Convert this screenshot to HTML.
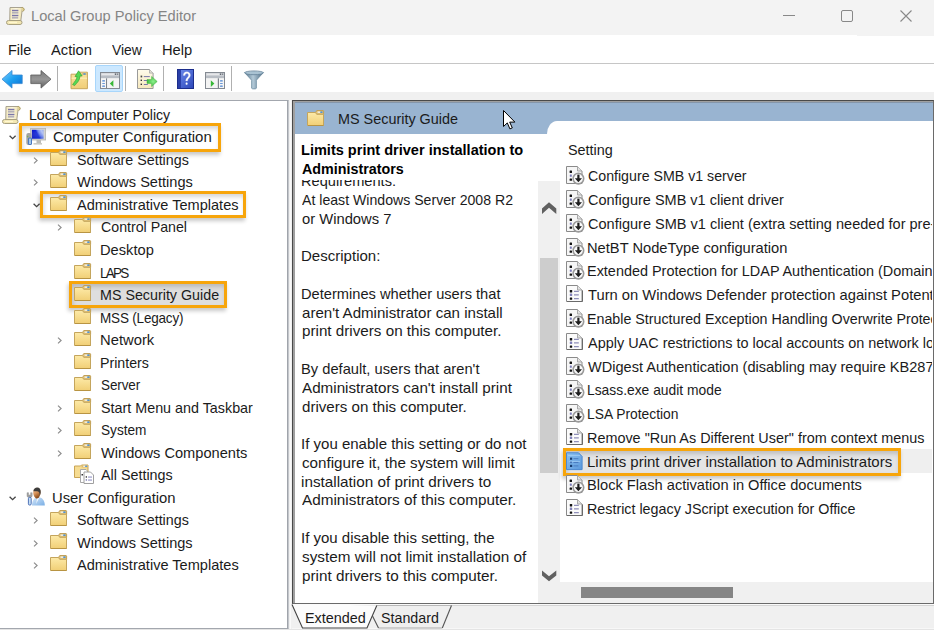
<!DOCTYPE html><html><head><meta charset="utf-8"><style>
html,body{margin:0;padding:0;}
body{width:934px;height:630px;position:relative;overflow:hidden;background:#fff;font-family:"Liberation Sans",sans-serif;}
.t{position:absolute;white-space:nowrap;line-height:15px;transform-origin:0 0;}
.ic{position:absolute;display:block;overflow:visible;}
.b{position:absolute;box-sizing:border-box;}
.clip{position:absolute;overflow:hidden;}
</style></head><body>
<div class="b" style="left:0;top:0;width:934px;height:35px;background:#f3f3f3"></div>
<div class="b" style="left:857px;top:35px;width:77px;height:1px;background:#f3f3f3"></div>
<svg class="ic" style="left:6px;top:6px" width="20" height="20" viewBox="0 0 20 20">
<defs><linearGradient id="g1" x1="0" y1="0" x2="1" y2="0"><stop offset="0" stop-color="#f1e7bd"/><stop offset="0.5" stop-color="#fdf8de"/><stop offset="1" stop-color="#efe2ae"/></linearGradient></defs>
<path d="M4 1.5h12.5l-1.8 14h-11z" fill="url(#g1)" stroke="#a8a290" stroke-width="1"/>
<path d="M15.5 1.5a2.2 2.2 0 0 1 2.6 2.8l-1.6 1.2" fill="#e4d395" stroke="#a89a60" stroke-width="1"/>
<rect x="6" y="3.8" width="6.4" height="1.3" fill="#7b76a8"/><rect x="6" y="5.6" width="6.4" height="2" fill="#b4b0b8"/>
<rect x="6" y="8.8" width="6.4" height="1.3" fill="#7b76a8"/><rect x="6" y="10.6" width="6.2" height="2" fill="#b4b0b8"/>
<path d="M2.5 14.5h11.5a2 2 0 0 1 0 4h-11.5a2 2 0 0 1 0-4z" fill="#f3e7b2" stroke="#a8a080" stroke-width="1"/>
<rect x="3" y="15.8" width="8" height="1.3" fill="#fff7d0"/>
</svg>
<div class="b" style="left:783px;top:15px;width:12px;height:1px;background:#888"></div>
<div class="b" style="left:841px;top:10px;width:12px;height:12px;border:1px solid #888;border-radius:2px"></div>
<svg class="ic" style="left:900px;top:10px" width="12" height="12" viewBox="0 0 12 12"><path d="M0.5 0.5L11.5 11.5M11.5 0.5L0.5 11.5" stroke="#888" stroke-width="1.1"/></svg>
<div class="b" style="left:0;top:63px;width:934px;height:1px;background:#c6c6c6"></div>
<div class="b" style="left:0;top:92px;width:934px;height:8px;background:#f0f0f0"></div>
<svg class="ic" style="left:1px;top:69px" width="22" height="21" viewBox="0 0 22 21">
<defs><linearGradient id="tba" x1="0" y1="0" x2="1" y2="1"><stop offset="0" stop-color="#7fd0ff"/><stop offset="0.5" stop-color="#1ea0f0"/><stop offset="1" stop-color="#0a6cd0"/></linearGradient></defs>
<path d="M1 10.2L11 1.5v4.5h10.2v8.6h-10.2v4.5z" fill="url(#tba)" stroke="#3a88d0" stroke-width="0.8" stroke-linejoin="round"/></svg>
<svg class="ic" style="left:30px;top:69px" width="22" height="21" viewBox="0 0 22 21">
<defs><linearGradient id="tbf" x1="0" y1="0" x2="0" y2="1"><stop offset="0" stop-color="#7a7a7a"/><stop offset="0.5" stop-color="#979797"/><stop offset="1" stop-color="#5e5e5e"/></linearGradient></defs>
<path d="M21 10.2L11 1.5v4.5H0.8v8.6h10.2v4.5z" fill="url(#tbf)" stroke="#5a5a5a" stroke-width="0.8" stroke-linejoin="round"/></svg>
<div class="b" style="left:57px;top:66px;width:1px;height:25px;background:#b0b0b0"></div>
<svg class="ic" style="left:70px;top:70px" width="20" height="20" viewBox="0 0 20 20">
<defs><linearGradient id="tbu" x1="0" y1="0" x2="0" y2="1"><stop offset="0" stop-color="#fbe3a0"/><stop offset="1" stop-color="#f0cd76"/></linearGradient></defs>
<path d="M1 4.2h7.2l1.2-2h8v16.5h-16.4z" fill="url(#tbu)" stroke="#c8a65c"/>
<rect x="1.5" y="7.6" width="15.5" height="1.2" fill="#fdeeb8"/>
<path d="M11.5 3.2h5.2v1.6h-5.2z" fill="#d9bb70"/><rect x="13.2" y="3.3" width="2.6" height="1.4" rx="0.7" fill="#4a90e0"/>
<path d="M2.6 14.6C4.4 11.6 6.8 9.8 7 6.4L5 6.5L8.6 0.8L12.2 6L10 6.1C9.9 10.6 6.8 13 4.6 15.6z" fill="#55d855" stroke="#2c9e2c" stroke-width="0.6" stroke-linejoin="round"/></svg>
<div class="b" style="left:95px;top:65px;width:28px;height:27px;background:#cce8ff;border:1px solid #a8d6fb;border-radius:2px"></div>
<svg class="ic" style="left:100px;top:72px" width="20" height="17" viewBox="0 0 20 17">
<rect x="0.5" y="0.5" width="19" height="16" fill="#f2f2f2" stroke="#848a92"/>
<rect x="1" y="1" width="18" height="2.6" fill="#c8ccd2"/><rect x="1.5" y="1.6" width="12.5" height="1.1" fill="#f2f2f2"/><rect x="15" y="1.5" width="1.2" height="1.4" fill="#5a6068"/><rect x="17" y="1.5" width="1.2" height="1.4" fill="#7a8088"/>
<rect x="1" y="3.6" width="18" height="2.8" fill="#b8bdc4"/>
<rect x="1" y="6.4" width="5" height="9.6" fill="#f6f6f6"/><rect x="6" y="6.4" width="1.2" height="9.6" fill="#7c828a"/>
<rect x="2.2" y="8.2" width="2.8" height="1.2" rx="0.5" fill="#4a82d0"/><rect x="2.2" y="10.9" width="2.8" height="1.2" rx="0.5" fill="#6a98d8"/><rect x="2.2" y="13.6" width="2.8" height="1.2" rx="0.5" fill="#4a82d0"/>
<rect x="7.2" y="6.4" width="11.8" height="9.6" fill="#f4f4f4"/>
<path d="M13.4 8.2l-3.6 3.4l3.6 3.4z" fill="#38b838"/></svg>
<div class="b" style="left:125px;top:66px;width:1px;height:25px;background:#b0b0b0"></div>
<svg class="ic" style="left:137px;top:69px" width="22" height="21" viewBox="0 0 22 21">
<defs><linearGradient id="tbe" x1="0" y1="0" x2="0" y2="1"><stop offset="0" stop-color="#fffbec"/><stop offset="1" stop-color="#f6e8bc"/></linearGradient>
<radialGradient id="tbg" cx="0.6" cy="0.5" r="0.6"><stop offset="0" stop-color="#8cf08c"/><stop offset="1" stop-color="#3cb83c"/></radialGradient></defs>
<path d="M0.5 0.5h12l3.6 3.6v15.4h-15.6z" fill="url(#tbe)" stroke="#9a9a9a"/><path d="M12.5 0.5v3.6h3.6" fill="#e4e0d4" stroke="#a8a8a8" stroke-width="0.8"/>
<rect x="3.6" y="6.6" width="1.6" height="1.8" fill="#444"/><rect x="6.8" y="7.1" width="6" height="1" fill="#7a78a8"/>
<rect x="3.6" y="10.6" width="1.4" height="1.4" fill="#333"/><rect x="6.8" y="11" width="4" height="1" fill="#7a78a8"/>
<rect x="3.6" y="14.6" width="1.4" height="1.4" fill="#333"/><rect x="6.8" y="15" width="4" height="1" fill="#7a78a8"/>
<path d="M10 10.6h4.6v-3.2l5.6 5.1l-5.6 5.1v-3.2h-4.6z" fill="url(#tbg)" stroke="#44b444" stroke-width="0.5" stroke-linejoin="round"/></svg>
<div class="b" style="left:163px;top:66px;width:1px;height:25px;background:#b0b0b0"></div>
<svg class="ic" style="left:177px;top:69px" width="17" height="20" viewBox="0 0 17 20">
<defs><linearGradient id="tbh" x1="0" y1="0" x2="1" y2="1"><stop offset="0" stop-color="#6f8ff0"/><stop offset="1" stop-color="#2c46b8"/></linearGradient></defs>
<rect x="0.5" y="0.5" width="16" height="19" fill="url(#tbh)" stroke="#1c2e8c"/>
<rect x="1" y="1" width="3" height="18" fill="#2a3fa8"/>
<path d="M6.2 6.4c0-2.3 1.5-3.7 3.6-3.7s3.6 1.3 3.6 3.4c0 3-2.8 3.2-2.8 5.9h-1.9c0-3.4 2.8-3.7 2.8-5.8c0-1-0.7-1.7-1.7-1.7s-1.7 0.8-1.7 1.9z" fill="#fff" stroke="#c8d0e8" stroke-width="0.3"/>
<rect x="8.6" y="13.6" width="2" height="2.2" rx="0.8" fill="#fff"/></svg>
<svg class="ic" style="left:205px;top:72px" width="20" height="17" viewBox="0 0 20 17">
<rect x="0.5" y="0.5" width="19" height="16" fill="#f2f2f2" stroke="#848a92"/>
<rect x="1" y="1" width="18" height="2.6" fill="#c8ccd2"/><rect x="1.5" y="1.6" width="12.5" height="1.1" fill="#f2f2f2"/><rect x="15" y="1.5" width="1.2" height="1.4" fill="#5a6068"/><rect x="17" y="1.5" width="1.2" height="1.4" fill="#7a8088"/>
<rect x="1" y="3.6" width="18" height="2.8" fill="#b8bdc4"/>
<rect x="1" y="6.4" width="11.8" height="9.6" fill="#f4f4f4"/>
<rect x="12.8" y="6.4" width="1.2" height="9.6" fill="#7c828a"/><rect x="14" y="6.4" width="5" height="9.6" fill="#f6f6f6"/>
<rect x="15" y="8.2" width="2.8" height="1.2" rx="0.5" fill="#4a82d0"/><rect x="15" y="10.9" width="2.8" height="1.2" rx="0.5" fill="#6a98d8"/><rect x="15" y="13.6" width="2.8" height="1.2" rx="0.5" fill="#4a82d0"/>
<path d="M5.8 8.2l3.6 3.4l-3.6 3.4z" fill="#38b838"/></svg>
<div class="b" style="left:231px;top:66px;width:1px;height:25px;background:#b0b0b0"></div>
<svg class="ic" style="left:244px;top:70px" width="20" height="20" viewBox="0 0 20 20">
<defs><linearGradient id="tbfl" x1="0" y1="0" x2="1" y2="0"><stop offset="0" stop-color="#4f6e84"/><stop offset="0.45" stop-color="#b4cad8"/><stop offset="1" stop-color="#4a6880"/></linearGradient></defs>
<path d="M0.6 2.6L7.6 10.2V18.2C7.6 19.2 12.4 19.2 12.4 18.2V10.2L19.4 2.6z" fill="url(#tbfl)" stroke="#66869c" stroke-width="0.7"/>
<ellipse cx="10" cy="2.8" rx="9.4" ry="1.9" fill="#a9c2d2" stroke="#5c7a90" stroke-width="0.7"/></svg>
<div class="b" style="left:0;top:100px;width:289px;height:529px;background:#fff;border-top:1px solid #a3a7ae;border-right:2px solid #c4c7cc;border-bottom:1px solid #a3a7ae"></div>
<div class="b" style="left:287px;top:100px;width:1px;height:529px;background:#a0a4ab"></div>
<div class="b" style="left:289px;top:100px;width:3px;height:530px;background:#f0f0f0"></div>
<div class="b" style="left:290px;top:100px;width:1px;height:530px;background:#fafafa"></div>
<div class="b" style="left:19px;top:123px;width:202px;height:29px;border:3px solid #f7a50b;background:#fff;box-shadow:-1px 3px 4px rgba(0,0,0,0.22), inset 1px 3px 4px rgba(0,0,0,0.16)"></div>
<div class="b" style="left:40px;top:191px;width:206px;height:27px;border:3px solid #f7a50b;background:#fff;box-shadow:-1px 3px 4px rgba(0,0,0,0.22), inset 1px 3px 4px rgba(0,0,0,0.16)"></div>
<div class="b" style="left:69px;top:281px;width:158px;height:27px;border:3px solid #f7a50b;background:#dedede;box-shadow:-1px 3px 4px rgba(0,0,0,0.22), inset 1px 3px 4px rgba(0,0,0,0.16)"></div>
<svg class="ic" style="left:2px;top:105px" width="20" height="20" viewBox="0 0 20 20">
<defs><linearGradient id="g2" x1="0" y1="0" x2="1" y2="0"><stop offset="0" stop-color="#f1e7bd"/><stop offset="0.5" stop-color="#fdf8de"/><stop offset="1" stop-color="#efe2ae"/></linearGradient></defs>
<path d="M4 1.5h12.5l-1.8 14h-11z" fill="url(#g2)" stroke="#a8a290" stroke-width="1"/>
<path d="M15.5 1.5a2.2 2.2 0 0 1 2.6 2.8l-1.6 1.2" fill="#e4d395" stroke="#a89a60" stroke-width="1"/>
<rect x="6" y="3.8" width="6.4" height="1.3" fill="#7b76a8"/><rect x="6" y="5.6" width="6.4" height="2" fill="#b4b0b8"/>
<rect x="6" y="8.8" width="6.4" height="1.3" fill="#7b76a8"/><rect x="6" y="10.6" width="6.2" height="2" fill="#b4b0b8"/>
<path d="M2.5 14.5h11.5a2 2 0 0 1 0 4h-11.5a2 2 0 0 1 0-4z" fill="#f3e7b2" stroke="#a8a080" stroke-width="1"/>
<rect x="3" y="15.8" width="8" height="1.3" fill="#fff7d0"/>
</svg>
<svg class="ic" style="left:24px;top:127px" width="24" height="20" viewBox="0 0 24 20">
<defs><linearGradient id="g3" x1="0" y1="0.4" x2="1" y2="0"><stop offset="0" stop-color="#0008c0"/><stop offset="0.38" stop-color="#0a1ed8"/><stop offset="0.55" stop-color="#7088ec"/><stop offset="0.8" stop-color="#b4c4f4"/><stop offset="1" stop-color="#90a6ee"/></linearGradient>
<linearGradient id="g4" x1="0" y1="0" x2="0" y2="1"><stop offset="0" stop-color="#ffffff" stop-opacity="0"/><stop offset="1" stop-color="#2040d0" stop-opacity="0.45"/></linearGradient></defs>
<rect x="6.6" y="1.5" width="15" height="11.5" fill="#d4d4d0" stroke="#b4b4b0" stroke-width="0.8"/>
<rect x="7.9" y="2.8" width="11.7" height="8.8" fill="url(#g3)"/>
<rect x="7.9" y="2.8" width="11.7" height="8.8" fill="url(#g4)"/>
<rect x="12.5" y="13" width="4.5" height="3" fill="#bcbcb8"/><rect x="9.5" y="16" width="8.5" height="1.6" fill="#c8c8c4"/>
<rect x="2.3" y="6" width="5.2" height="12" rx="2" fill="#a4a4a4"/>
<circle cx="3.6" cy="9.6" r="0.8" fill="#78b058"/>
<rect x="4" y="10.5" width="4" height="7.6" rx="1.6" fill="#4a78c0"/><rect x="5.3" y="11.6" width="1.4" height="5.4" fill="#c8e8f8"/>
</svg>
<svg class="ic" style="left:9px;top:135px" width="8" height="6" viewBox="0 0 8 6"><path d="M0.6 0.7L3.6 3.7L6.6 0.7" fill="none" stroke="#444" stroke-width="1.3"/></svg>
<svg class="ic" style="left:50px;top:150px" width="18" height="17" viewBox="0 0 18 17">
<defs><linearGradient id="g5" x1="0" y1="0" x2="0" y2="1"><stop offset="0" stop-color="#fdeaa8"/><stop offset="1" stop-color="#f1cf76"/></linearGradient></defs>
<path d="M8.5 2.5L9.8 0.5h6.2a0.8 0.8 0 0 1 0.6 0.6v3.4h-8.3z" fill="#dfc077" stroke="#c2a057" stroke-width="1"/>
<rect x="10.6" y="1.4" width="3" height="1.6" fill="#eeeadc"/><rect x="13.3" y="1.4" width="2.2" height="1.6" fill="#4d93d8"/>
<path d="M0.5 2.5h8l1.2 1.8h6.8v11.2h-16z" fill="url(#g5)" stroke="#c4a55d" stroke-width="1"/>
<path d="M1 15.5h15.5" stroke="#b89443" stroke-width="1"/>
</svg>
<svg class="ic" style="left:33px;top:157px" width="6" height="8" viewBox="0 0 6 8"><path d="M1 0.6L4.1 3.5L1 6.4" fill="none" stroke="#8c8c8c" stroke-width="1.15"/></svg>
<svg class="ic" style="left:50px;top:172px" width="18" height="17" viewBox="0 0 18 17">
<defs><linearGradient id="g6" x1="0" y1="0" x2="0" y2="1"><stop offset="0" stop-color="#fdeaa8"/><stop offset="1" stop-color="#f1cf76"/></linearGradient></defs>
<path d="M8.5 2.5L9.8 0.5h6.2a0.8 0.8 0 0 1 0.6 0.6v3.4h-8.3z" fill="#dfc077" stroke="#c2a057" stroke-width="1"/>
<rect x="10.6" y="1.4" width="3" height="1.6" fill="#eeeadc"/><rect x="13.3" y="1.4" width="2.2" height="1.6" fill="#4d93d8"/>
<path d="M0.5 2.5h8l1.2 1.8h6.8v11.2h-16z" fill="url(#g6)" stroke="#c4a55d" stroke-width="1"/>
<path d="M1 15.5h15.5" stroke="#b89443" stroke-width="1"/>
</svg>
<svg class="ic" style="left:33px;top:179px" width="6" height="8" viewBox="0 0 6 8"><path d="M1 0.6L4.1 3.5L1 6.4" fill="none" stroke="#8c8c8c" stroke-width="1.15"/></svg>
<svg class="ic" style="left:50px;top:195px" width="18" height="17" viewBox="0 0 18 17">
<defs><linearGradient id="g7" x1="0" y1="0" x2="0" y2="1"><stop offset="0" stop-color="#fdeaa8"/><stop offset="1" stop-color="#f1cf76"/></linearGradient></defs>
<path d="M8.5 2.5L9.8 0.5h6.2a0.8 0.8 0 0 1 0.6 0.6v3.4h-8.3z" fill="#dfc077" stroke="#c2a057" stroke-width="1"/>
<rect x="10.6" y="1.4" width="3" height="1.6" fill="#eeeadc"/><rect x="13.3" y="1.4" width="2.2" height="1.6" fill="#4d93d8"/>
<path d="M0.5 2.5h8l1.2 1.8h6.8v11.2h-16z" fill="url(#g7)" stroke="#c4a55d" stroke-width="1"/>
<path d="M1 15.5h15.5" stroke="#b89443" stroke-width="1"/>
</svg>
<svg class="ic" style="left:33px;top:203px" width="8" height="6" viewBox="0 0 8 6"><path d="M0.6 0.7L3.6 3.7L6.6 0.7" fill="none" stroke="#444" stroke-width="1.3"/></svg>
<svg class="ic" style="left:74px;top:217px" width="18" height="17" viewBox="0 0 18 17">
<defs><linearGradient id="g8" x1="0" y1="0" x2="0" y2="1"><stop offset="0" stop-color="#fdeaa8"/><stop offset="1" stop-color="#f1cf76"/></linearGradient></defs>
<path d="M8.5 2.5L9.8 0.5h6.2a0.8 0.8 0 0 1 0.6 0.6v3.4h-8.3z" fill="#dfc077" stroke="#c2a057" stroke-width="1"/>
<rect x="10.6" y="1.4" width="3" height="1.6" fill="#eeeadc"/><rect x="13.3" y="1.4" width="2.2" height="1.6" fill="#4d93d8"/>
<path d="M0.5 2.5h8l1.2 1.8h6.8v11.2h-16z" fill="url(#g8)" stroke="#c4a55d" stroke-width="1"/>
<path d="M1 15.5h15.5" stroke="#b89443" stroke-width="1"/>
</svg>
<svg class="ic" style="left:57px;top:224px" width="6" height="8" viewBox="0 0 6 8"><path d="M1 0.6L4.1 3.5L1 6.4" fill="none" stroke="#8c8c8c" stroke-width="1.15"/></svg>
<svg class="ic" style="left:74px;top:240px" width="18" height="17" viewBox="0 0 18 17">
<defs><linearGradient id="g9" x1="0" y1="0" x2="0" y2="1"><stop offset="0" stop-color="#fdeaa8"/><stop offset="1" stop-color="#f1cf76"/></linearGradient></defs>
<path d="M8.5 2.5L9.8 0.5h6.2a0.8 0.8 0 0 1 0.6 0.6v3.4h-8.3z" fill="#dfc077" stroke="#c2a057" stroke-width="1"/>
<rect x="10.6" y="1.4" width="3" height="1.6" fill="#eeeadc"/><rect x="13.3" y="1.4" width="2.2" height="1.6" fill="#4d93d8"/>
<path d="M0.5 2.5h8l1.2 1.8h6.8v11.2h-16z" fill="url(#g9)" stroke="#c4a55d" stroke-width="1"/>
<path d="M1 15.5h15.5" stroke="#b89443" stroke-width="1"/>
</svg>
<svg class="ic" style="left:74px;top:263px" width="18" height="17" viewBox="0 0 18 17">
<defs><linearGradient id="g10" x1="0" y1="0" x2="0" y2="1"><stop offset="0" stop-color="#fdeaa8"/><stop offset="1" stop-color="#f1cf76"/></linearGradient></defs>
<path d="M8.5 2.5L9.8 0.5h6.2a0.8 0.8 0 0 1 0.6 0.6v3.4h-8.3z" fill="#dfc077" stroke="#c2a057" stroke-width="1"/>
<rect x="10.6" y="1.4" width="3" height="1.6" fill="#eeeadc"/><rect x="13.3" y="1.4" width="2.2" height="1.6" fill="#4d93d8"/>
<path d="M0.5 2.5h8l1.2 1.8h6.8v11.2h-16z" fill="url(#g10)" stroke="#c4a55d" stroke-width="1"/>
<path d="M1 15.5h15.5" stroke="#b89443" stroke-width="1"/>
</svg>
<svg class="ic" style="left:74px;top:285px" width="18" height="17" viewBox="0 0 18 17">
<defs><linearGradient id="g11" x1="0" y1="0" x2="0" y2="1"><stop offset="0" stop-color="#fdeaa8"/><stop offset="1" stop-color="#f1cf76"/></linearGradient></defs>
<path d="M8.5 2.5L9.8 0.5h6.2a0.8 0.8 0 0 1 0.6 0.6v3.4h-8.3z" fill="#dfc077" stroke="#c2a057" stroke-width="1"/>
<rect x="10.6" y="1.4" width="3" height="1.6" fill="#eeeadc"/><rect x="13.3" y="1.4" width="2.2" height="1.6" fill="#4d93d8"/>
<path d="M0.5 2.5h8l1.2 1.8h6.8v11.2h-16z" fill="url(#g11)" stroke="#c4a55d" stroke-width="1"/>
<path d="M1 15.5h15.5" stroke="#b89443" stroke-width="1"/>
</svg>
<svg class="ic" style="left:74px;top:308px" width="18" height="17" viewBox="0 0 18 17">
<defs><linearGradient id="g12" x1="0" y1="0" x2="0" y2="1"><stop offset="0" stop-color="#fdeaa8"/><stop offset="1" stop-color="#f1cf76"/></linearGradient></defs>
<path d="M8.5 2.5L9.8 0.5h6.2a0.8 0.8 0 0 1 0.6 0.6v3.4h-8.3z" fill="#dfc077" stroke="#c2a057" stroke-width="1"/>
<rect x="10.6" y="1.4" width="3" height="1.6" fill="#eeeadc"/><rect x="13.3" y="1.4" width="2.2" height="1.6" fill="#4d93d8"/>
<path d="M0.5 2.5h8l1.2 1.8h6.8v11.2h-16z" fill="url(#g12)" stroke="#c4a55d" stroke-width="1"/>
<path d="M1 15.5h15.5" stroke="#b89443" stroke-width="1"/>
</svg>
<svg class="ic" style="left:74px;top:330px" width="18" height="17" viewBox="0 0 18 17">
<defs><linearGradient id="g13" x1="0" y1="0" x2="0" y2="1"><stop offset="0" stop-color="#fdeaa8"/><stop offset="1" stop-color="#f1cf76"/></linearGradient></defs>
<path d="M8.5 2.5L9.8 0.5h6.2a0.8 0.8 0 0 1 0.6 0.6v3.4h-8.3z" fill="#dfc077" stroke="#c2a057" stroke-width="1"/>
<rect x="10.6" y="1.4" width="3" height="1.6" fill="#eeeadc"/><rect x="13.3" y="1.4" width="2.2" height="1.6" fill="#4d93d8"/>
<path d="M0.5 2.5h8l1.2 1.8h6.8v11.2h-16z" fill="url(#g13)" stroke="#c4a55d" stroke-width="1"/>
<path d="M1 15.5h15.5" stroke="#b89443" stroke-width="1"/>
</svg>
<svg class="ic" style="left:57px;top:337px" width="6" height="8" viewBox="0 0 6 8"><path d="M1 0.6L4.1 3.5L1 6.4" fill="none" stroke="#8c8c8c" stroke-width="1.15"/></svg>
<svg class="ic" style="left:74px;top:353px" width="18" height="17" viewBox="0 0 18 17">
<defs><linearGradient id="g14" x1="0" y1="0" x2="0" y2="1"><stop offset="0" stop-color="#fdeaa8"/><stop offset="1" stop-color="#f1cf76"/></linearGradient></defs>
<path d="M8.5 2.5L9.8 0.5h6.2a0.8 0.8 0 0 1 0.6 0.6v3.4h-8.3z" fill="#dfc077" stroke="#c2a057" stroke-width="1"/>
<rect x="10.6" y="1.4" width="3" height="1.6" fill="#eeeadc"/><rect x="13.3" y="1.4" width="2.2" height="1.6" fill="#4d93d8"/>
<path d="M0.5 2.5h8l1.2 1.8h6.8v11.2h-16z" fill="url(#g14)" stroke="#c4a55d" stroke-width="1"/>
<path d="M1 15.5h15.5" stroke="#b89443" stroke-width="1"/>
</svg>
<svg class="ic" style="left:74px;top:375px" width="18" height="17" viewBox="0 0 18 17">
<defs><linearGradient id="g15" x1="0" y1="0" x2="0" y2="1"><stop offset="0" stop-color="#fdeaa8"/><stop offset="1" stop-color="#f1cf76"/></linearGradient></defs>
<path d="M8.5 2.5L9.8 0.5h6.2a0.8 0.8 0 0 1 0.6 0.6v3.4h-8.3z" fill="#dfc077" stroke="#c2a057" stroke-width="1"/>
<rect x="10.6" y="1.4" width="3" height="1.6" fill="#eeeadc"/><rect x="13.3" y="1.4" width="2.2" height="1.6" fill="#4d93d8"/>
<path d="M0.5 2.5h8l1.2 1.8h6.8v11.2h-16z" fill="url(#g15)" stroke="#c4a55d" stroke-width="1"/>
<path d="M1 15.5h15.5" stroke="#b89443" stroke-width="1"/>
</svg>
<svg class="ic" style="left:74px;top:398px" width="18" height="17" viewBox="0 0 18 17">
<defs><linearGradient id="g16" x1="0" y1="0" x2="0" y2="1"><stop offset="0" stop-color="#fdeaa8"/><stop offset="1" stop-color="#f1cf76"/></linearGradient></defs>
<path d="M8.5 2.5L9.8 0.5h6.2a0.8 0.8 0 0 1 0.6 0.6v3.4h-8.3z" fill="#dfc077" stroke="#c2a057" stroke-width="1"/>
<rect x="10.6" y="1.4" width="3" height="1.6" fill="#eeeadc"/><rect x="13.3" y="1.4" width="2.2" height="1.6" fill="#4d93d8"/>
<path d="M0.5 2.5h8l1.2 1.8h6.8v11.2h-16z" fill="url(#g16)" stroke="#c4a55d" stroke-width="1"/>
<path d="M1 15.5h15.5" stroke="#b89443" stroke-width="1"/>
</svg>
<svg class="ic" style="left:57px;top:405px" width="6" height="8" viewBox="0 0 6 8"><path d="M1 0.6L4.1 3.5L1 6.4" fill="none" stroke="#8c8c8c" stroke-width="1.15"/></svg>
<svg class="ic" style="left:74px;top:420px" width="18" height="17" viewBox="0 0 18 17">
<defs><linearGradient id="g17" x1="0" y1="0" x2="0" y2="1"><stop offset="0" stop-color="#fdeaa8"/><stop offset="1" stop-color="#f1cf76"/></linearGradient></defs>
<path d="M8.5 2.5L9.8 0.5h6.2a0.8 0.8 0 0 1 0.6 0.6v3.4h-8.3z" fill="#dfc077" stroke="#c2a057" stroke-width="1"/>
<rect x="10.6" y="1.4" width="3" height="1.6" fill="#eeeadc"/><rect x="13.3" y="1.4" width="2.2" height="1.6" fill="#4d93d8"/>
<path d="M0.5 2.5h8l1.2 1.8h6.8v11.2h-16z" fill="url(#g17)" stroke="#c4a55d" stroke-width="1"/>
<path d="M1 15.5h15.5" stroke="#b89443" stroke-width="1"/>
</svg>
<svg class="ic" style="left:57px;top:427px" width="6" height="8" viewBox="0 0 6 8"><path d="M1 0.6L4.1 3.5L1 6.4" fill="none" stroke="#8c8c8c" stroke-width="1.15"/></svg>
<svg class="ic" style="left:74px;top:443px" width="18" height="17" viewBox="0 0 18 17">
<defs><linearGradient id="g18" x1="0" y1="0" x2="0" y2="1"><stop offset="0" stop-color="#fdeaa8"/><stop offset="1" stop-color="#f1cf76"/></linearGradient></defs>
<path d="M8.5 2.5L9.8 0.5h6.2a0.8 0.8 0 0 1 0.6 0.6v3.4h-8.3z" fill="#dfc077" stroke="#c2a057" stroke-width="1"/>
<rect x="10.6" y="1.4" width="3" height="1.6" fill="#eeeadc"/><rect x="13.3" y="1.4" width="2.2" height="1.6" fill="#4d93d8"/>
<path d="M0.5 2.5h8l1.2 1.8h6.8v11.2h-16z" fill="url(#g18)" stroke="#c4a55d" stroke-width="1"/>
<path d="M1 15.5h15.5" stroke="#b89443" stroke-width="1"/>
</svg>
<svg class="ic" style="left:57px;top:450px" width="6" height="8" viewBox="0 0 6 8"><path d="M1 0.6L4.1 3.5L1 6.4" fill="none" stroke="#8c8c8c" stroke-width="1.15"/></svg>
<svg class="ic" style="left:74px;top:464px" width="21" height="20" viewBox="0 0 21 20">
<path d="M0.5 2h6l1 -1h6.5v12.5h-13.5z" fill="#f6dc92" stroke="#c9a455"/>
<path d="M7.5 1h6.5v2.5h-6.5z" fill="#dcbc70"/><rect x="9.2" y="1.6" width="2.2" height="1.4" fill="#f0ece0"/><rect x="11.2" y="1.6" width="2" height="1.4" fill="#5a9ad8"/>
<path d="M6.5 5.5h5.5l1.5 1.5v11.5h-7z" fill="#fff" stroke="#a8a8a8"/>
<path d="M10 8h6.5l3 3v8.5h-9.5z" fill="#fff" stroke="#a0a0a0"/>
<rect x="11.7" y="12.3" width="1.3" height="1.3" fill="#222"/><rect x="14" y="12.6" width="4" height="0.9" fill="#7a7ab8"/>
<rect x="11.7" y="15.3" width="1.3" height="1.3" fill="#6a6aa8"/><rect x="14" y="15.6" width="4" height="0.9" fill="#7a7ab8"/>
<rect x="7.5" y="10" width="1.5" height="1.5" fill="#333"/>
</svg>
<svg class="ic" style="left:26px;top:487px" width="20" height="20" viewBox="0 0 20 20">
<defs><linearGradient id="g19" x1="0" y1="0" x2="0.4" y2="1"><stop offset="0" stop-color="#f6d2ae"/><stop offset="0.55" stop-color="#d8935a"/><stop offset="1" stop-color="#8a4a1a"/></linearGradient>
<linearGradient id="g20" x1="0" y1="0" x2="1" y2="1"><stop offset="0" stop-color="#d6e8fa"/><stop offset="1" stop-color="#7aaee4"/></linearGradient></defs>
<path d="M6 18.5c0-5 2.5-8.5 6.2-8.5s6.6 3.5 6.6 8.5z" fill="url(#g20)"/>
<path d="M10 17l1.2-6h2z" fill="#ffffff" opacity="0.8"/>
<path d="M7.2 5.2c0-2.6 1.6-4.4 3.8-4.4c2.2 0 3.6 1.8 3.6 4.2c0 2.8-1.6 6.5-3.6 6.5c-2.2 0-3.8-3.4-3.8-6.3z" fill="url(#g19)"/>
<path d="M7.4 4.2c0.3-2.2 1.8-3.6 3.8-3.6c2.4 0 3.7 1.8 3.5 4.6c-0.1 1.3-0.5 2.4-0.9 3.2c-0.1-1.6-0.4-3-1.2-3.6c-1.5-0.9-3.6-0.4-5.2-0.6z" fill="#3c3c3c"/>
<path d="M1 5.7h1.6v2.2h2v-2.2h1.6v2.8a1.6 1.6 0 0 1-1.2 1.8h-2.8a1.6 1.6 0 0 1-1.2-1.8z" fill="#a2a2a2" stroke="#8a8a8a" stroke-width="0.4"/>
<rect x="2.4" y="10.3" width="2.8" height="7.8" rx="1.3" fill="#c4def4" stroke="#3e64b0" stroke-width="0.9"/>
</svg>
<svg class="ic" style="left:9px;top:496px" width="8" height="6" viewBox="0 0 8 6"><path d="M0.6 0.7L3.6 3.7L6.6 0.7" fill="none" stroke="#444" stroke-width="1.3"/></svg>
<svg class="ic" style="left:50px;top:510px" width="18" height="17" viewBox="0 0 18 17">
<defs><linearGradient id="g21" x1="0" y1="0" x2="0" y2="1"><stop offset="0" stop-color="#fdeaa8"/><stop offset="1" stop-color="#f1cf76"/></linearGradient></defs>
<path d="M8.5 2.5L9.8 0.5h6.2a0.8 0.8 0 0 1 0.6 0.6v3.4h-8.3z" fill="#dfc077" stroke="#c2a057" stroke-width="1"/>
<rect x="10.6" y="1.4" width="3" height="1.6" fill="#eeeadc"/><rect x="13.3" y="1.4" width="2.2" height="1.6" fill="#4d93d8"/>
<path d="M0.5 2.5h8l1.2 1.8h6.8v11.2h-16z" fill="url(#g21)" stroke="#c4a55d" stroke-width="1"/>
<path d="M1 15.5h15.5" stroke="#b89443" stroke-width="1"/>
</svg>
<svg class="ic" style="left:33px;top:517px" width="6" height="8" viewBox="0 0 6 8"><path d="M1 0.6L4.1 3.5L1 6.4" fill="none" stroke="#8c8c8c" stroke-width="1.15"/></svg>
<svg class="ic" style="left:50px;top:533px" width="18" height="17" viewBox="0 0 18 17">
<defs><linearGradient id="g22" x1="0" y1="0" x2="0" y2="1"><stop offset="0" stop-color="#fdeaa8"/><stop offset="1" stop-color="#f1cf76"/></linearGradient></defs>
<path d="M8.5 2.5L9.8 0.5h6.2a0.8 0.8 0 0 1 0.6 0.6v3.4h-8.3z" fill="#dfc077" stroke="#c2a057" stroke-width="1"/>
<rect x="10.6" y="1.4" width="3" height="1.6" fill="#eeeadc"/><rect x="13.3" y="1.4" width="2.2" height="1.6" fill="#4d93d8"/>
<path d="M0.5 2.5h8l1.2 1.8h6.8v11.2h-16z" fill="url(#g22)" stroke="#c4a55d" stroke-width="1"/>
<path d="M1 15.5h15.5" stroke="#b89443" stroke-width="1"/>
</svg>
<svg class="ic" style="left:33px;top:540px" width="6" height="8" viewBox="0 0 6 8"><path d="M1 0.6L4.1 3.5L1 6.4" fill="none" stroke="#8c8c8c" stroke-width="1.15"/></svg>
<svg class="ic" style="left:50px;top:555px" width="18" height="17" viewBox="0 0 18 17">
<defs><linearGradient id="g23" x1="0" y1="0" x2="0" y2="1"><stop offset="0" stop-color="#fdeaa8"/><stop offset="1" stop-color="#f1cf76"/></linearGradient></defs>
<path d="M8.5 2.5L9.8 0.5h6.2a0.8 0.8 0 0 1 0.6 0.6v3.4h-8.3z" fill="#dfc077" stroke="#c2a057" stroke-width="1"/>
<rect x="10.6" y="1.4" width="3" height="1.6" fill="#eeeadc"/><rect x="13.3" y="1.4" width="2.2" height="1.6" fill="#4d93d8"/>
<path d="M0.5 2.5h8l1.2 1.8h6.8v11.2h-16z" fill="url(#g23)" stroke="#c4a55d" stroke-width="1"/>
<path d="M1 15.5h15.5" stroke="#b89443" stroke-width="1"/>
</svg>
<svg class="ic" style="left:33px;top:562px" width="6" height="8" viewBox="0 0 6 8"><path d="M1 0.6L4.1 3.5L1 6.4" fill="none" stroke="#8c8c8c" stroke-width="1.15"/></svg>
<div class="t" style="left:28.56px;top:107px;font-size:15px;color:#1b1b1b;transform:scaleX(0.9407)">Local Computer Policy</div>
<div class="t" style="left:53.00px;top:129px;font-size:15px;color:#1b1b1b;transform:scaleX(0.9968)">Computer Configuration</div>
<div class="t" style="left:76.70px;top:152px;font-size:15px;color:#1b1b1b;transform:scaleX(0.9508)">Software Settings</div>
<div class="t" style="left:76.70px;top:174px;font-size:15px;color:#1b1b1b;transform:scaleX(0.9712)">Windows Settings</div>
<div class="t" style="left:76.70px;top:197px;font-size:15px;color:#1b1b1b;transform:scaleX(0.9704)">Administrative Templates</div>
<div class="t" style="left:100.60px;top:219px;font-size:15px;color:#1b1b1b;transform:scaleX(0.9464)">Control Panel</div>
<div class="t" style="left:99.62px;top:242px;font-size:15px;color:#1b1b1b;transform:scaleX(0.9779)">Desktop</div>
<div class="t" style="left:99.70px;top:265px;font-size:15px;color:#1b1b1b;letter-spacing:-1.969px;transform:scaleX(0.9000)">LAPS</div>
<div class="t" style="left:99.65px;top:287px;font-size:15px;color:#1b1b1b;transform:scaleX(0.9523)">MS Security Guide</div>
<div class="t" style="left:99.70px;top:310px;font-size:15px;color:#1b1b1b;letter-spacing:-0.205px;transform:scaleX(0.9000)">MSS (Legacy)</div>
<div class="t" style="left:99.61px;top:332px;font-size:15px;color:#1b1b1b;transform:scaleX(0.9851)">Network</div>
<div class="t" style="left:99.65px;top:355px;font-size:15px;color:#1b1b1b;transform:scaleX(0.9466)">Printers</div>
<div class="t" style="left:100.60px;top:377px;font-size:15px;color:#1b1b1b;letter-spacing:-0.126px;transform:scaleX(0.9000)">Server</div>
<div class="t" style="left:100.60px;top:400px;font-size:15px;color:#1b1b1b;transform:scaleX(0.9551)">Start Menu and Taskbar</div>
<div class="t" style="left:100.60px;top:422px;font-size:15px;color:#1b1b1b;transform:scaleX(0.9088)">System</div>
<div class="t" style="left:100.60px;top:445px;font-size:15px;color:#1b1b1b;transform:scaleX(0.9748)">Windows Components</div>
<div class="t" style="left:100.60px;top:467px;font-size:15px;color:#1b1b1b;transform:scaleX(0.9552)">All Settings</div>
<div class="t" style="left:52.01px;top:490px;font-size:15px;color:#1b1b1b;transform:scaleX(0.9877)">User Configuration</div>
<div class="t" style="left:76.70px;top:512px;font-size:15px;color:#1b1b1b;transform:scaleX(0.9508)">Software Settings</div>
<div class="t" style="left:76.70px;top:535px;font-size:15px;color:#1b1b1b;transform:scaleX(0.9695)">Windows Settings</div>
<div class="t" style="left:76.70px;top:557px;font-size:15px;color:#1b1b1b;transform:scaleX(0.9716)">Administrative Templates</div>
<div class="b" style="left:292px;top:100px;width:642px;height:504px;border:1px solid #6a6a6a;border-top-color:#4a4a4a;border-left-color:#4a4a4a;background:#fff"></div>
<div class="b" style="left:293px;top:101px;width:640px;height:502px;border-left:2px solid #a0a0a0;border-top:1px solid #a0a0a0"></div>
<div class="b" style="left:295px;top:102px;width:638px;height:32px;background:#99b4d1;border-top:1px solid #8596aa"></div>
<div class="b" style="left:547px;top:121px;width:386px;height:20px;background:#fff;border-top-left-radius:10px 13px"></div>
<svg class="ic" style="left:307px;top:110px" width="18" height="17" viewBox="0 0 18 17">
<defs><linearGradient id="g24" x1="0" y1="0" x2="0" y2="1"><stop offset="0" stop-color="#fdeaa8"/><stop offset="1" stop-color="#f1cf76"/></linearGradient></defs>
<path d="M8.5 2.5L9.8 0.5h6.2a0.8 0.8 0 0 1 0.6 0.6v3.4h-8.3z" fill="#dfc077" stroke="#c2a057" stroke-width="1"/>
<rect x="10.6" y="1.4" width="3" height="1.6" fill="#eeeadc"/><rect x="13.3" y="1.4" width="2.2" height="1.6" fill="#4d93d8"/>
<path d="M0.5 2.5h8l1.2 1.8h6.8v11.2h-16z" fill="url(#g24)" stroke="#c4a55d" stroke-width="1"/>
<path d="M1 15.5h15.5" stroke="#b89443" stroke-width="1"/>
</svg>
<div class="t" style="left:338.34px;top:111px;font-size:15px;color:#1b1b1b;transform:scaleX(0.9595)">MS Security Guide</div>
<div class="t" style="left:301.23px;top:142px;font-size:15px;color:#000;font-weight:bold;transform:scaleX(0.9692)">Limits print driver installation to</div>
<div class="t" style="left:302.20px;top:160.5px;font-size:15px;color:#000;font-weight:bold;transform:scaleX(0.9545)">Administrators</div>
<div class="t" style="left:568.20px;top:142px;font-size:15px;color:#1b1b1b;transform:scaleX(0.9599)">Setting</div>
<div class="clip" style="left:294px;top:180px;width:245px;height:423px">
<div class="t" style="left:6.73px;top:-7px;font-size:15px;color:#1b1b1b;transform:scaleX(0.9740)">Requirements:</div>
<div class="t" style="left:7.70px;top:12px;font-size:15px;color:#1b1b1b;transform:scaleX(0.9409)">At least Windows Server 2008 R2</div>
<div class="t" style="left:7.70px;top:31px;font-size:15px;color:#1b1b1b;transform:scaleX(0.9843)">or Windows 7</div>
<div class="t" style="left:6.70px;top:68px;font-size:15px;color:#1b1b1b;transform:scaleX(1.0022)">Description:</div>
<div class="t" style="left:6.72px;top:106px;font-size:15px;color:#1b1b1b;transform:scaleX(0.9765)">Determines whether users that</div>
<div class="t" style="left:7.70px;top:125px;font-size:15px;color:#1b1b1b;transform:scaleX(1.0054)">aren't Administrator can install</div>
<div class="t" style="left:7.70px;top:143px;font-size:15px;color:#1b1b1b;transform:scaleX(1.0139)">print drivers on this computer.</div>
<div class="t" style="left:6.72px;top:181px;font-size:15px;color:#1b1b1b;transform:scaleX(0.9799)">By default, users that aren't</div>
<div class="t" style="left:7.70px;top:200px;font-size:15px;color:#1b1b1b;transform:scaleX(1.0133)">Administrators can't install print</div>
<div class="t" style="left:7.70px;top:219px;font-size:15px;color:#1b1b1b;transform:scaleX(1.0084)">drivers on this computer.</div>
<div class="t" style="left:6.70px;top:256px;font-size:15px;color:#1b1b1b;transform:scaleX(1.0014)">If you enable this setting or do not</div>
<div class="t" style="left:7.70px;top:275px;font-size:15px;color:#1b1b1b;transform:scaleX(1.0124)">configure it, the system will limit</div>
<div class="t" style="left:6.68px;top:294px;font-size:15px;color:#1b1b1b;transform:scaleX(1.0183)">installation of print drivers to</div>
<div class="t" style="left:7.70px;top:312px;font-size:15px;color:#1b1b1b;transform:scaleX(1.0196)">Administrators of this computer.</div>
<div class="t" style="left:6.70px;top:350px;font-size:15px;color:#1b1b1b;transform:scaleX(1.0005)">If you disable this setting, the</div>
<div class="t" style="left:7.70px;top:369px;font-size:15px;color:#1b1b1b;transform:scaleX(1.0185)">system will not limit installation of</div>
<div class="t" style="left:7.70px;top:388px;font-size:15px;color:#1b1b1b;transform:scaleX(1.0177)">print drivers to this computer.</div>
</div>
<div class="b" style="left:538px;top:181px;width:22px;height:422px;background:#f0f0f0"></div>
<div class="b" style="left:540px;top:258px;width:18px;height:215px;background:#cdcdcd"></div>
<svg class="ic" style="left:541px;top:202px" width="17" height="14" viewBox="0 0 17 14"><path d="M1 6.5L8 0.3L15.3 6.5V12L8 5.8L1 12z" fill="#606060"/></svg>
<svg class="ic" style="left:541px;top:570px" width="17" height="14" viewBox="0 0 17 14"><path d="M1 0.6L8 6.3L15.3 0.6V5.6L8 11.3L1 5.6z" fill="#606060"/></svg>
<div class="b" style="left:563px;top:449px;width:369px;height:24px;background:#efefef"></div>
<div class="b" style="left:563px;top:448px;width:338px;height:28px;border:3px solid #f7a50b;background:#e4e4e4;box-shadow:-1px 3px 4px rgba(0,0,0,0.22), inset 1px 3px 4px rgba(0,0,0,0.16)"></div>
<div class="clip" style="left:560px;top:160px;width:372px;height:422px">
<svg class="ic" style="left:6px;top:6px" width="20" height="20" viewBox="0 0 20 20">
<path d="M0.5 0.5h11l4.5 4.5v12.5h-15.5z" fill="#f6f6f6" stroke="#8a8a8a"/>
<path d="M11.5 0.5v4.5h4.5" fill="#e2e2e2" stroke="#a0a0a0" stroke-width="0.9"/>
<rect x="3.6" y="4.6" width="2.4" height="2.4" rx="0.5" fill="#111"/>
<rect x="3.8" y="8.6" width="2" height="2.2" rx="0.5" fill="#7a7ab8"/>
<rect x="3.6" y="12.4" width="2.4" height="2.4" rx="0.5" fill="#111"/>
<circle cx="12.4" cy="12.6" r="5.3" fill="#fafafa" stroke="#9a9a9a" stroke-width="1.6"/>
<path d="M12.4 8.6v5" stroke="#1e1e1e" stroke-width="2.2"/><path d="M8.8 12.2h7.2l-3.6 4z" fill="#1e1e1e"/>
</svg>
<svg class="ic" style="left:6px;top:30px" width="20" height="20" viewBox="0 0 20 20">
<path d="M0.5 0.5h11l4.5 4.5v12.5h-15.5z" fill="#f6f6f6" stroke="#8a8a8a"/>
<path d="M11.5 0.5v4.5h4.5" fill="#e2e2e2" stroke="#a0a0a0" stroke-width="0.9"/>
<rect x="3.6" y="4.6" width="2.4" height="2.4" rx="0.5" fill="#111"/>
<rect x="3.8" y="8.6" width="2" height="2.2" rx="0.5" fill="#7a7ab8"/>
<rect x="3.6" y="12.4" width="2.4" height="2.4" rx="0.5" fill="#111"/>
<circle cx="12.4" cy="12.6" r="5.3" fill="#fafafa" stroke="#9a9a9a" stroke-width="1.6"/>
<path d="M12.4 8.6v5" stroke="#1e1e1e" stroke-width="2.2"/><path d="M8.8 12.2h7.2l-3.6 4z" fill="#1e1e1e"/>
</svg>
<svg class="ic" style="left:6px;top:54px" width="20" height="20" viewBox="0 0 20 20">
<path d="M0.5 0.5h11l4.5 4.5v12.5h-15.5z" fill="#f6f6f6" stroke="#8a8a8a"/>
<path d="M11.5 0.5v4.5h4.5" fill="#e2e2e2" stroke="#a0a0a0" stroke-width="0.9"/>
<rect x="3.6" y="4.6" width="2.4" height="2.4" rx="0.5" fill="#111"/>
<rect x="3.8" y="8.6" width="2" height="2.2" rx="0.5" fill="#7a7ab8"/>
<rect x="3.6" y="12.4" width="2.4" height="2.4" rx="0.5" fill="#111"/>
<circle cx="12.4" cy="12.6" r="5.3" fill="#fafafa" stroke="#9a9a9a" stroke-width="1.6"/>
<path d="M12.4 8.6v5" stroke="#1e1e1e" stroke-width="2.2"/><path d="M8.8 12.2h7.2l-3.6 4z" fill="#1e1e1e"/>
</svg>
<svg class="ic" style="left:6px;top:78px" width="20" height="20" viewBox="0 0 20 20">
<path d="M0.5 0.5h11l4.5 4.5v12.5h-15.5z" fill="#f6f6f6" stroke="#8a8a8a"/>
<path d="M11.5 0.5v4.5h4.5" fill="#e2e2e2" stroke="#a0a0a0" stroke-width="0.9"/>
<rect x="3.6" y="4.6" width="2.4" height="2.4" rx="0.5" fill="#111"/>
<rect x="3.8" y="8.6" width="2" height="2.2" rx="0.5" fill="#7a7ab8"/>
<rect x="3.6" y="12.4" width="2.4" height="2.4" rx="0.5" fill="#111"/>
<circle cx="12.4" cy="12.6" r="5.3" fill="#fafafa" stroke="#9a9a9a" stroke-width="1.6"/>
<path d="M12.4 8.6v5" stroke="#1e1e1e" stroke-width="2.2"/><path d="M8.8 12.2h7.2l-3.6 4z" fill="#1e1e1e"/>
</svg>
<svg class="ic" style="left:6px;top:101px" width="20" height="20" viewBox="0 0 20 20">
<path d="M0.5 0.5h11l4.5 4.5v12.5h-15.5z" fill="#f6f6f6" stroke="#8a8a8a"/>
<path d="M11.5 0.5v4.5h4.5" fill="#e2e2e2" stroke="#a0a0a0" stroke-width="0.9"/>
<rect x="3.6" y="4.6" width="2.4" height="2.4" rx="0.5" fill="#111"/>
<rect x="3.8" y="8.6" width="2" height="2.2" rx="0.5" fill="#7a7ab8"/>
<rect x="3.6" y="12.4" width="2.4" height="2.4" rx="0.5" fill="#111"/>
<circle cx="12.4" cy="12.6" r="5.3" fill="#fafafa" stroke="#9a9a9a" stroke-width="1.6"/>
<path d="M12.4 8.6v5" stroke="#1e1e1e" stroke-width="2.2"/><path d="M8.8 12.2h7.2l-3.6 4z" fill="#1e1e1e"/>
</svg>
<svg class="ic" style="left:6px;top:125px" width="20" height="20" viewBox="0 0 20 20">
<path d="M0.5 0.5h11l4.5 4.5v11.5h-15.5z" fill="#fbfbfb" stroke="#8a8a8a"/>
<path d="M1 16.5h15.5v-11" fill="none" stroke="#6a6a6a" stroke-width="1"/>
<path d="M11.5 0.5v4.5h4.5" fill="#e2e2e2" stroke="#a0a0a0" stroke-width="0.9"/>
<rect x="3.8" y="5" width="2.4" height="2.4" rx="0.5" fill="#111"/><rect x="8" y="5.8" width="4.8" height="1" fill="#7474a8"/>
<rect x="3.8" y="8.6" width="2.4" height="2.4" rx="0.5" fill="#8080b8"/><rect x="8" y="9.4" width="4.8" height="1" fill="#7474a8"/>
<rect x="3.8" y="12.4" width="2.4" height="2.4" rx="0.5" fill="#111"/><rect x="8" y="13.2" width="4.8" height="1" fill="#7474a8"/>
</svg>
<svg class="ic" style="left:6px;top:149px" width="20" height="20" viewBox="0 0 20 20">
<path d="M0.5 0.5h11l4.5 4.5v12.5h-15.5z" fill="#f6f6f6" stroke="#8a8a8a"/>
<path d="M11.5 0.5v4.5h4.5" fill="#e2e2e2" stroke="#a0a0a0" stroke-width="0.9"/>
<rect x="3.6" y="4.6" width="2.4" height="2.4" rx="0.5" fill="#111"/>
<rect x="3.8" y="8.6" width="2" height="2.2" rx="0.5" fill="#7a7ab8"/>
<rect x="3.6" y="12.4" width="2.4" height="2.4" rx="0.5" fill="#111"/>
<circle cx="12.4" cy="12.6" r="5.3" fill="#fafafa" stroke="#9a9a9a" stroke-width="1.6"/>
<path d="M12.4 8.6v5" stroke="#1e1e1e" stroke-width="2.2"/><path d="M8.8 12.2h7.2l-3.6 4z" fill="#1e1e1e"/>
</svg>
<svg class="ic" style="left:6px;top:173px" width="20" height="20" viewBox="0 0 20 20">
<path d="M0.5 0.5h11l4.5 4.5v11.5h-15.5z" fill="#fbfbfb" stroke="#8a8a8a"/>
<path d="M1 16.5h15.5v-11" fill="none" stroke="#6a6a6a" stroke-width="1"/>
<path d="M11.5 0.5v4.5h4.5" fill="#e2e2e2" stroke="#a0a0a0" stroke-width="0.9"/>
<rect x="3.8" y="5" width="2.4" height="2.4" rx="0.5" fill="#111"/><rect x="8" y="5.8" width="4.8" height="1" fill="#7474a8"/>
<rect x="3.8" y="8.6" width="2.4" height="2.4" rx="0.5" fill="#8080b8"/><rect x="8" y="9.4" width="4.8" height="1" fill="#7474a8"/>
<rect x="3.8" y="12.4" width="2.4" height="2.4" rx="0.5" fill="#111"/><rect x="8" y="13.2" width="4.8" height="1" fill="#7474a8"/>
</svg>
<svg class="ic" style="left:6px;top:197px" width="20" height="20" viewBox="0 0 20 20">
<path d="M0.5 0.5h11l4.5 4.5v12.5h-15.5z" fill="#f6f6f6" stroke="#8a8a8a"/>
<path d="M11.5 0.5v4.5h4.5" fill="#e2e2e2" stroke="#a0a0a0" stroke-width="0.9"/>
<rect x="3.6" y="4.6" width="2.4" height="2.4" rx="0.5" fill="#111"/>
<rect x="3.8" y="8.6" width="2" height="2.2" rx="0.5" fill="#7a7ab8"/>
<rect x="3.6" y="12.4" width="2.4" height="2.4" rx="0.5" fill="#111"/>
<circle cx="12.4" cy="12.6" r="5.3" fill="#fafafa" stroke="#9a9a9a" stroke-width="1.6"/>
<path d="M12.4 8.6v5" stroke="#1e1e1e" stroke-width="2.2"/><path d="M8.8 12.2h7.2l-3.6 4z" fill="#1e1e1e"/>
</svg>
<svg class="ic" style="left:6px;top:220px" width="20" height="20" viewBox="0 0 20 20">
<path d="M0.5 0.5h11l4.5 4.5v12.5h-15.5z" fill="#f6f6f6" stroke="#8a8a8a"/>
<path d="M11.5 0.5v4.5h4.5" fill="#e2e2e2" stroke="#a0a0a0" stroke-width="0.9"/>
<rect x="3.6" y="4.6" width="2.4" height="2.4" rx="0.5" fill="#111"/>
<rect x="3.8" y="8.6" width="2" height="2.2" rx="0.5" fill="#7a7ab8"/>
<rect x="3.6" y="12.4" width="2.4" height="2.4" rx="0.5" fill="#111"/>
<circle cx="12.4" cy="12.6" r="5.3" fill="#fafafa" stroke="#9a9a9a" stroke-width="1.6"/>
<path d="M12.4 8.6v5" stroke="#1e1e1e" stroke-width="2.2"/><path d="M8.8 12.2h7.2l-3.6 4z" fill="#1e1e1e"/>
</svg>
<svg class="ic" style="left:6px;top:244px" width="20" height="20" viewBox="0 0 20 20">
<path d="M0.5 0.5h11l4.5 4.5v12.5h-15.5z" fill="#f6f6f6" stroke="#8a8a8a"/>
<path d="M11.5 0.5v4.5h4.5" fill="#e2e2e2" stroke="#a0a0a0" stroke-width="0.9"/>
<rect x="3.6" y="4.6" width="2.4" height="2.4" rx="0.5" fill="#111"/>
<rect x="3.8" y="8.6" width="2" height="2.2" rx="0.5" fill="#7a7ab8"/>
<rect x="3.6" y="12.4" width="2.4" height="2.4" rx="0.5" fill="#111"/>
<circle cx="12.4" cy="12.6" r="5.3" fill="#fafafa" stroke="#9a9a9a" stroke-width="1.6"/>
<path d="M12.4 8.6v5" stroke="#1e1e1e" stroke-width="2.2"/><path d="M8.8 12.2h7.2l-3.6 4z" fill="#1e1e1e"/>
</svg>
<svg class="ic" style="left:6px;top:268px" width="20" height="20" viewBox="0 0 20 20">
<path d="M0.5 0.5h11l4.5 4.5v11.5h-15.5z" fill="#fbfbfb" stroke="#8a8a8a"/>
<path d="M1 16.5h15.5v-11" fill="none" stroke="#6a6a6a" stroke-width="1"/>
<path d="M11.5 0.5v4.5h4.5" fill="#e2e2e2" stroke="#a0a0a0" stroke-width="0.9"/>
<rect x="3.8" y="5" width="2.4" height="2.4" rx="0.5" fill="#111"/><rect x="8" y="5.8" width="4.8" height="1" fill="#7474a8"/>
<rect x="3.8" y="8.6" width="2.4" height="2.4" rx="0.5" fill="#8080b8"/><rect x="8" y="9.4" width="4.8" height="1" fill="#7474a8"/>
<rect x="3.8" y="12.4" width="2.4" height="2.4" rx="0.5" fill="#111"/><rect x="8" y="13.2" width="4.8" height="1" fill="#7474a8"/>
</svg>
<svg class="ic" style="left:6px;top:292px" width="18" height="19" viewBox="0 0 18 19">
<defs><linearGradient id="g25" x1="0" y1="0" x2="1" y2="1"><stop offset="0" stop-color="#8ec2f0"/><stop offset="0.5" stop-color="#74ade6"/><stop offset="1" stop-color="#5a98dc"/></linearGradient></defs>
<path d="M0.5 0.8h12l3.6 3.6v13.2h-15.6z" fill="url(#g25)" stroke="#4a88d0"/>
<rect x="2" y="3" width="12" height="1" fill="#a8d2f6" opacity="0.7"/><rect x="3" y="9" width="11" height="1" fill="#a8d2f6" opacity="0.6"/>
<rect x="4" y="5.6" width="2.2" height="2.2" fill="#183c70"/><rect x="7.4" y="6.2" width="5" height="1" fill="#4a7cc0"/>
<rect x="4" y="9.6" width="2" height="1.6" fill="#4a78b8"/><rect x="7.4" y="10" width="5" height="1" fill="#4a7cc0"/>
<rect x="4" y="12.8" width="2.2" height="2.2" fill="#183c70"/><rect x="7.4" y="13.4" width="5" height="1" fill="#4a7cc0"/>
</svg>
<svg class="ic" style="left:6px;top:315px" width="20" height="20" viewBox="0 0 20 20">
<path d="M0.5 0.5h11l4.5 4.5v12.5h-15.5z" fill="#f6f6f6" stroke="#8a8a8a"/>
<path d="M11.5 0.5v4.5h4.5" fill="#e2e2e2" stroke="#a0a0a0" stroke-width="0.9"/>
<rect x="3.6" y="4.6" width="2.4" height="2.4" rx="0.5" fill="#111"/>
<rect x="3.8" y="8.6" width="2" height="2.2" rx="0.5" fill="#7a7ab8"/>
<rect x="3.6" y="12.4" width="2.4" height="2.4" rx="0.5" fill="#111"/>
<circle cx="12.4" cy="12.6" r="5.3" fill="#fafafa" stroke="#9a9a9a" stroke-width="1.6"/>
<path d="M12.4 8.6v5" stroke="#1e1e1e" stroke-width="2.2"/><path d="M8.8 12.2h7.2l-3.6 4z" fill="#1e1e1e"/>
</svg>
<svg class="ic" style="left:6px;top:339px" width="20" height="20" viewBox="0 0 20 20">
<path d="M0.5 0.5h11l4.5 4.5v11.5h-15.5z" fill="#fbfbfb" stroke="#8a8a8a"/>
<path d="M1 16.5h15.5v-11" fill="none" stroke="#6a6a6a" stroke-width="1"/>
<path d="M11.5 0.5v4.5h4.5" fill="#e2e2e2" stroke="#a0a0a0" stroke-width="0.9"/>
<rect x="3.8" y="5" width="2.4" height="2.4" rx="0.5" fill="#111"/><rect x="8" y="5.8" width="4.8" height="1" fill="#7474a8"/>
<rect x="3.8" y="8.6" width="2.4" height="2.4" rx="0.5" fill="#8080b8"/><rect x="8" y="9.4" width="4.8" height="1" fill="#7474a8"/>
<rect x="3.8" y="12.4" width="2.4" height="2.4" rx="0.5" fill="#111"/><rect x="8" y="13.2" width="4.8" height="1" fill="#7474a8"/>
</svg>
<div class="t" style="left:28.20px;top:8px;font-size:15px;color:#1b1b1b;transform:scaleX(0.9459)">Configure SMB v1 server</div>
<div class="t" style="left:28.20px;top:32px;font-size:15px;color:#1b1b1b;transform:scaleX(0.9665)">Configure SMB v1 client driver</div>
<div class="t" style="left:28.20px;top:56px;font-size:15px;color:#1b1b1b;transform:scaleX(0.9689)">Configure SMB v1 client (extra setting needed for pre-Win8)</div>
<div class="t" style="left:27.22px;top:80px;font-size:15px;color:#1b1b1b;transform:scaleX(0.9785)">NetBT NodeType configuration</div>
<div class="t" style="left:27.24px;top:103px;font-size:15px;color:#1b1b1b;transform:scaleX(0.9621)">Extended Protection for LDAP Authentication (Domain Member)</div>
<div class="t" style="left:28.20px;top:127px;font-size:15px;color:#1b1b1b;transform:scaleX(0.9817)">Turn on Windows Defender protection against Potentially Unwanted Applications</div>
<div class="t" style="left:27.25px;top:151px;font-size:15px;color:#1b1b1b;transform:scaleX(0.9494)">Enable Structured Exception Handling Overwrite Protection</div>
<div class="t" style="left:28.20px;top:175px;font-size:15px;color:#1b1b1b;transform:scaleX(0.9632)">Apply UAC restrictions to local accounts on network logons</div>
<div class="t" style="left:28.20px;top:199px;font-size:15px;color:#1b1b1b;transform:scaleX(0.9706)">WDigest Authentication (disabling may require KB2871997)</div>
<div class="t" style="left:27.28px;top:222px;font-size:15px;color:#1b1b1b;transform:scaleX(0.9227)">Lsass.exe audit mode</div>
<div class="t" style="left:27.28px;top:246px;font-size:15px;color:#1b1b1b;transform:scaleX(0.9219)">LSA Protection</div>
<div class="t" style="left:27.24px;top:270px;font-size:15px;color:#1b1b1b;transform:scaleX(0.9602)">Remove "Run As Different User" from context menus</div>
<div class="t" style="left:27.20px;top:294px;font-size:15px;color:#1b1b1b;transform:scaleX(1.0002)">Limits print driver installation to Administrators</div>
<div class="t" style="left:27.22px;top:317px;font-size:15px;color:#1b1b1b;transform:scaleX(0.9760)">Block Flash activation in Office documents</div>
<div class="t" style="left:27.25px;top:341px;font-size:15px;color:#1b1b1b;transform:scaleX(0.9534)">Restrict legacy JScript execution for Office</div>
</div>
<div class="b" style="left:560px;top:582px;width:373px;height:21px;background:#f0f0f0"></div>
<div class="b" style="left:581px;top:587px;width:152px;height:11px;background:#858585"></div>
<svg class="ic" style="left:503px;top:110px" width="13" height="20" viewBox="0 0 13 20"><path d="M0.5 0.5v16l3.8-3.6l2.6 6l2.4-1l-2.6-5.8h5.2z" fill="#fff" stroke="#000" stroke-width="1"/></svg>
<div class="b" style="left:292px;top:604px;width:642px;height:26px;background:#f0f0f0"></div>
<div class="b" style="left:292px;top:604px;width:642px;height:1px;background:#fafafa"></div>
<div class="b" style="left:292px;top:605px;width:642px;height:1px;background:#d4d4d4"></div>
<div class="b" style="left:292px;top:628px;width:642px;height:2px;background:#f7f7f7"></div>
<svg class="ic" style="left:290px;top:603px" width="170" height="27" viewBox="0 0 170 27">
<path d="M87 2.5L161.5 2.5L152 25L88.5 25z" fill="#efefef"/>
<path d="M86.5 2.5H161.5" stroke="#b8b8b8" stroke-width="1"/>
<path d="M152.3 25L161.5 2.5" stroke="#555" stroke-width="1.1"/>
<path d="M88.5 25H152" stroke="#a8a8a8" stroke-width="1"/>
<path d="M82.5 13L88.5 25" stroke="#555" stroke-width="1.1"/>
<path d="M2 1L12.5 25H77L86.8 2.5" fill="#fcfcfc"/>
<path d="M2 1.5L12.5 25H77L86.8 2.5" fill="none" stroke="#444" stroke-width="1.1"/>
</svg>
<div class="t" style="left:304.94px;top:610px;font-size:15px;color:#1b1b1b;transform:scaleX(0.9600)">Extended</div>
<div class="t" style="left:381.40px;top:610px;font-size:15px;color:#1b1b1b;transform:scaleX(0.9498)">Standard</div>
<div class="t" style="left:31.02px;top:8px;font-size:15px;color:#858585;transform:scaleX(0.9753)">Local Group Policy Editor</div>
<div class="t" style="left:8.04px;top:42px;font-size:15px;color:#1b1b1b;transform:scaleX(0.9637)">File</div>
<div class="t" style="left:51.00px;top:42px;font-size:15px;color:#1b1b1b;transform:scaleX(0.9819)">Action</div>
<div class="t" style="left:112.40px;top:42px;font-size:15px;color:#1b1b1b;transform:scaleX(0.9257)">View</div>
<div class="t" style="left:161.72px;top:42px;font-size:15px;color:#1b1b1b;transform:scaleX(0.9794)">Help</div>
<div class="b" style="left:0;top:629px;width:934px;height:1px;background:#e4e4e4"></div>
</body></html>
